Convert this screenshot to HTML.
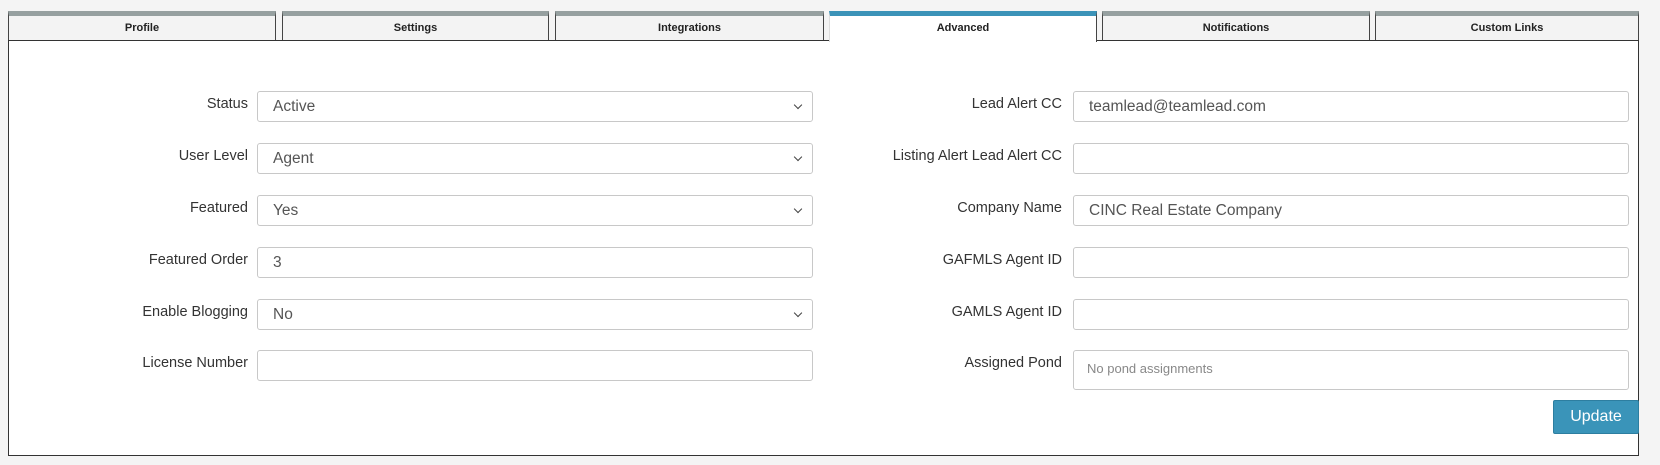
<!DOCTYPE html>
<html><head><style>
body{margin:0;width:1660px;height:465px;background:#f4f4f4;font-family:"Liberation Sans",sans-serif;position:relative;overflow:hidden}
.tab{position:absolute;top:11px;height:29px;box-sizing:border-box;background:#f3f3f3;border:1px solid #444;border-top:5px solid #96a0a0;border-bottom:none;font-size:11px;font-weight:bold;color:#222;text-align:center;line-height:25px}
.tab.act{background:#fff;border-top-color:#3b93b8;border-left-color:#ddd;height:31px;z-index:2;border-right-color:#444}
.panel{position:absolute;left:8px;top:40px;width:1631px;height:416px;box-sizing:border-box;border:1px solid #333;background:#fff}
.lbl{position:absolute;font-size:14.5px;color:#333;text-align:right;width:300px}
.in{position:absolute;box-sizing:border-box;height:31px;border:1px solid #c8c8c8;border-radius:3px;background:#fff;font-size:15.5px;color:#555;padding-left:15px;line-height:30px}
.sel::after{content:"";position:absolute;right:11px;top:10px;width:5px;height:5px;border-right:1.5px solid #444;border-bottom:1.5px solid #444;transform:rotate(45deg)}
.btn{position:absolute;left:1553px;top:400px;width:86px;height:34px;background:#3a94b9;border:1px solid #2d7ea0;box-sizing:border-box;border-radius:2px;color:#fff;font-size:16px;text-align:center;line-height:32px}
</style></head><body>
<div class="tab" style="left:8px;width:268px">Profile</div>
<div class="tab" style="left:282px;width:267px">Settings</div>
<div class="tab" style="left:555px;width:269px">Integrations</div>
<div class="tab act" style="left:829px;width:268px">Advanced</div>
<div class="tab" style="left:1102px;width:268px">Notifications</div>
<div class="tab" style="left:1375px;width:264px">Custom Links</div>
<div class="panel"></div>

<div class="lbl" style="left:-52px;top:96px">Status</div>
<div class="in sel" style="left:257px;top:91px;width:556px">Active</div>
<div class="lbl" style="left:-52px;top:148px">User Level</div>
<div class="in sel" style="left:257px;top:143px;width:556px">Agent</div>
<div class="lbl" style="left:-52px;top:200px">Featured</div>
<div class="in sel" style="left:257px;top:195px;width:556px">Yes</div>
<div class="lbl" style="left:-52px;top:252px">Featured Order</div>
<div class="in" style="left:257px;top:247px;width:556px">3</div>
<div class="lbl" style="left:-52px;top:304px">Enable Blogging</div>
<div class="in sel" style="left:257px;top:299px;width:556px">No</div>
<div class="lbl" style="left:-52px;top:355px">License Number</div>
<div class="in" style="left:257px;top:350px;width:556px"></div>

<div class="lbl" style="left:762px;top:96px">Lead Alert CC</div>
<div class="in" style="left:1073px;top:91px;width:556px">teamlead@teamlead.com</div>
<div class="lbl" style="left:762px;top:148px">Listing Alert Lead Alert CC</div>
<div class="in" style="left:1073px;top:143px;width:556px"></div>
<div class="lbl" style="left:762px;top:200px">Company Name</div>
<div class="in" style="left:1073px;top:195px;width:556px">CINC Real Estate Company</div>
<div class="lbl" style="left:762px;top:252px">GAFMLS Agent ID</div>
<div class="in" style="left:1073px;top:247px;width:556px"></div>
<div class="lbl" style="left:762px;top:304px">GAMLS Agent ID</div>
<div class="in" style="left:1073px;top:299px;width:556px"></div>
<div class="lbl" style="left:762px;top:355px">Assigned Pond</div>
<div class="in" style="left:1073px;top:350px;width:556px;height:40px;font-size:13px;color:#888;padding-left:13px;line-height:36px">No pond assignments</div>
<div class="btn">Update</div>
</body></html>
